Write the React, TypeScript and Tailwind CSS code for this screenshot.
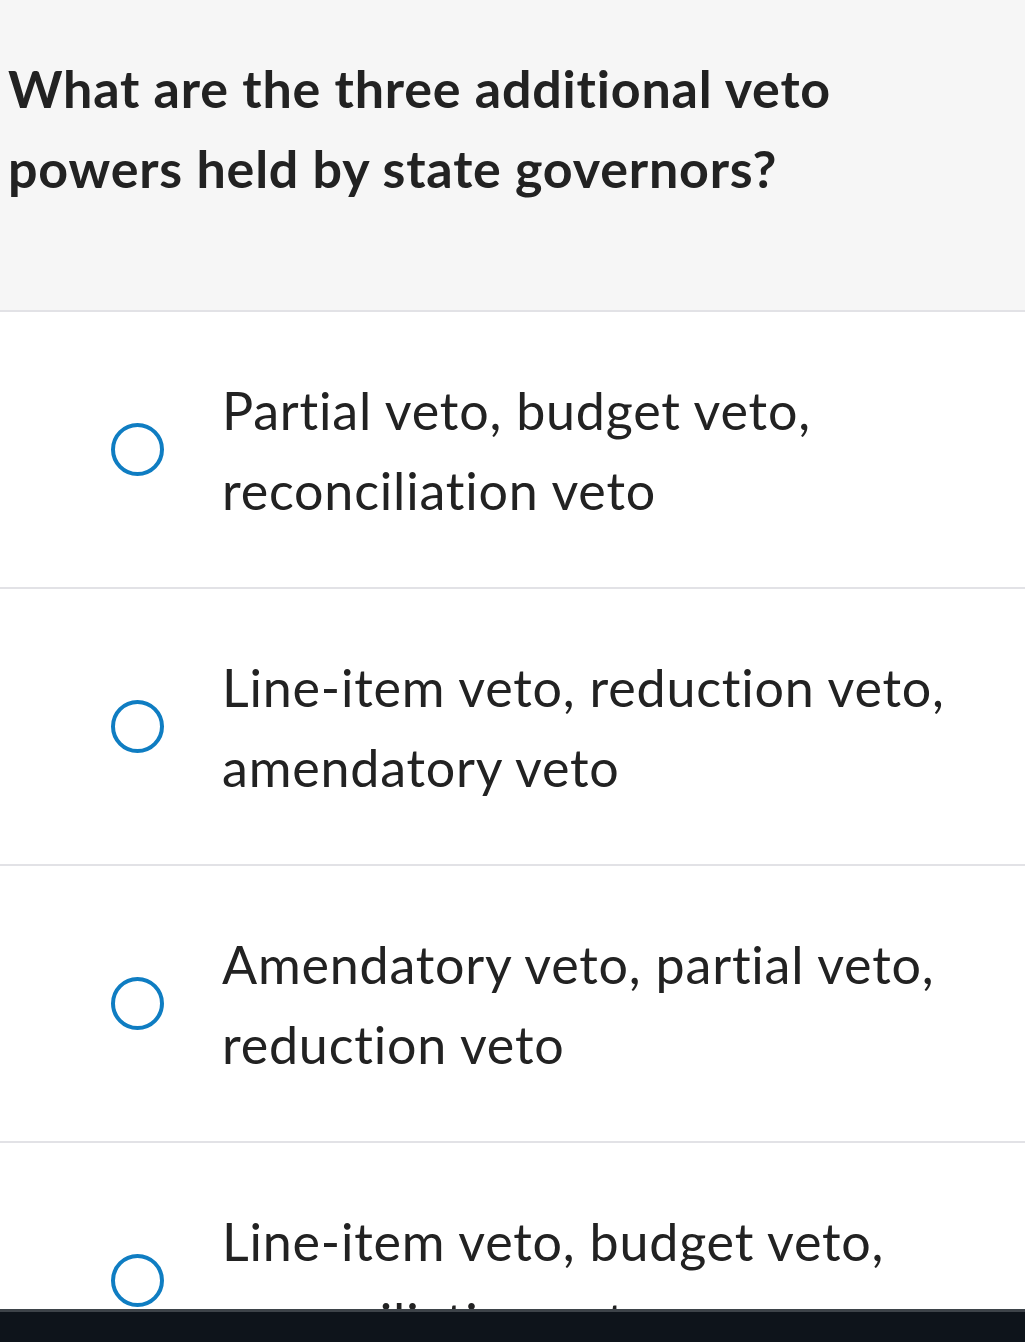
import { memo } from "react"

const choices = [
  "Partial veto, budget veto, reconciliation veto",
  "Line-item veto, reduction veto, amendatory veto",
  "Amendatory veto, partial veto, reduction veto",
  "Line-item veto, budget veto, reconciliation veto",
]

function Choice({ label }: { label: string }) {
  return (
    <label className="flex items-center border-b-2 border-[#e2e2e6] min-h-[277px] py-[57px] cursor-pointer">
      <span className="ml-[111px] w-[53px] h-[53px] shrink-0 rounded-full border-[4.5px] border-[#0f7dc2]" />
      <span className="ml-[58px] pr-8 text-[52px] leading-[80px] tracking-[0.8px] text-[#222]">{label}</span>
    </label>
  )
}

export default memo(function App() {
  return (
    <div className="min-h-screen bg-white font-['Lato','Noto_Sans',sans-serif] [font-variant-ligatures:none] overflow-hidden">
      <div className="bg-[#f6f6f6] h-[312px] border-b-2 border-[#e2e2e6] pl-[8px] pr-[10px] pt-[48px]">
        <h1 className="text-[52px] leading-[80px] font-bold tracking-[0.8px] text-[#222] max-w-[880px]">
          What are the three additional veto powers held by state governors?
        </h1>
      </div>
      {choices.map((c) => (
        <Choice key={c} label={c} />
      ))}
      <div className="fixed bottom-0 left-0 right-0 h-[33px] border-t-[3px] border-[#3d4349] bg-[#0e141b]" />
    </div>
  )
})
